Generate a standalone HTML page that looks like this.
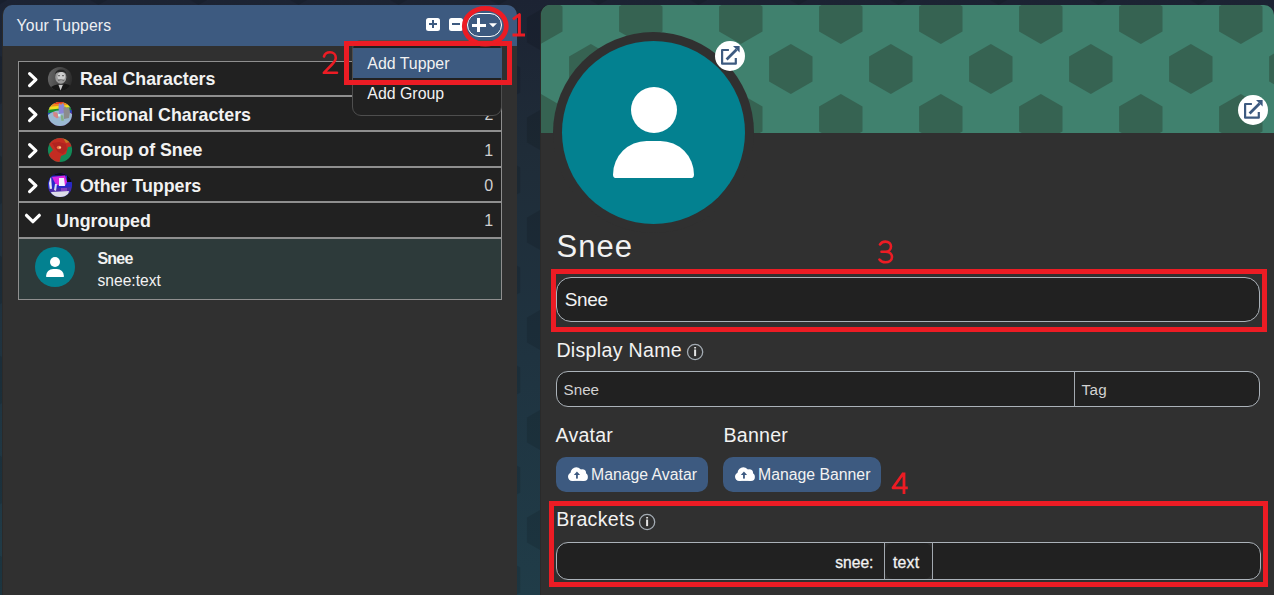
<!DOCTYPE html>
<html><head><meta charset="utf-8">
<style>
*{box-sizing:border-box;margin:0;padding:0}
html,body{width:1274px;height:595px;overflow:hidden;background:linear-gradient(180deg,#1c2333 0,#1f2c38 25%,#1f3340 60%,#203c48 100%);font-family:"Liberation Sans",sans-serif;color:#f2f2f2}
.a{position:absolute}
.t{position:absolute;white-space:nowrap;line-height:1}
#lp{left:2px;top:5px;width:515px;height:600px;background:#303030;border-left:1px solid #2a2a2a;border-radius:10px 10px 0 0;overflow:hidden}
#lh{left:0;top:0;width:514px;height:41px;background:#3d5a80}
.ln{background:#8f8f8f}
.cnt{position:absolute;color:#d0d0d0;font-size:16px;line-height:1}
#rp{left:540px;top:5px;width:734px;height:600px;background:#303030;border-left:1px solid #2a2a2a;border-radius:10px 10px 0 0;overflow:hidden}
.red{position:absolute;border:5px solid #ec1c24}
.rn{position:absolute;color:#ec1c24;line-height:1;white-space:nowrap}
.inp{position:absolute;background:#212121;border:1px solid #abb2b9}
.btn{position:absolute;background:#3d5a80;border-radius:10px}
</style></head><body>
<svg class="a" style="left:0;top:0" width="1274" height="595"><g fill="#000" fill-opacity="0.11"><polygon points="-1.4,-45.0 20.3,-32.5 20.3,-7.5 -1.4,5.0 -23.1,-7.5 -23.1,-32.5"/><polygon points="98.6,-45.0 120.3,-32.5 120.3,-7.5 98.6,5.0 76.9,-7.5 76.9,-32.5"/><polygon points="198.6,-45.0 220.3,-32.5 220.3,-7.5 198.6,5.0 176.9,-7.5 176.9,-32.5"/><polygon points="298.6,-45.0 320.3,-32.5 320.3,-7.5 298.6,5.0 276.9,-7.5 276.9,-32.5"/><polygon points="398.6,-45.0 420.3,-32.5 420.3,-7.5 398.6,5.0 376.9,-7.5 376.9,-32.5"/><polygon points="498.6,-45.0 520.3,-32.5 520.3,-7.5 498.6,5.0 476.9,-7.5 476.9,-32.5"/><polygon points="598.6,-45.0 620.3,-32.5 620.3,-7.5 598.6,5.0 576.9,-7.5 576.9,-32.5"/><polygon points="698.6,-45.0 720.3,-32.5 720.3,-7.5 698.6,5.0 676.9,-7.5 676.9,-32.5"/><polygon points="798.6,-45.0 820.3,-32.5 820.3,-7.5 798.6,5.0 776.9,-7.5 776.9,-32.5"/><polygon points="898.6,-45.0 920.3,-32.5 920.3,-7.5 898.6,5.0 876.9,-7.5 876.9,-32.5"/><polygon points="998.6,-45.0 1020.3,-32.5 1020.3,-7.5 998.6,5.0 976.9,-7.5 976.9,-32.5"/><polygon points="1098.6,-45.0 1120.3,-32.5 1120.3,-7.5 1098.6,5.0 1076.9,-7.5 1076.9,-32.5"/><polygon points="1198.6,-45.0 1220.3,-32.5 1220.3,-7.5 1198.6,5.0 1176.9,-7.5 1176.9,-32.5"/><polygon points="48.6,5.0 70.3,17.5 70.3,42.5 48.6,55.0 26.9,42.5 26.9,17.5"/><polygon points="148.6,5.0 170.3,17.5 170.3,42.5 148.6,55.0 126.9,42.5 126.9,17.5"/><polygon points="248.6,5.0 270.3,17.5 270.3,42.5 248.6,55.0 226.9,42.5 226.9,17.5"/><polygon points="348.6,5.0 370.3,17.5 370.3,42.5 348.6,55.0 326.9,42.5 326.9,17.5"/><polygon points="448.6,5.0 470.3,17.5 470.3,42.5 448.6,55.0 426.9,42.5 426.9,17.5"/><polygon points="548.6,5.0 570.3,17.5 570.3,42.5 548.6,55.0 526.9,42.5 526.9,17.5"/><polygon points="648.6,5.0 670.3,17.5 670.3,42.5 648.6,55.0 626.9,42.5 626.9,17.5"/><polygon points="748.6,5.0 770.3,17.5 770.3,42.5 748.6,55.0 726.9,42.5 726.9,17.5"/><polygon points="848.6,5.0 870.3,17.5 870.3,42.5 848.6,55.0 826.9,42.5 826.9,17.5"/><polygon points="948.6,5.0 970.3,17.5 970.3,42.5 948.6,55.0 926.9,42.5 926.9,17.5"/><polygon points="1048.6,5.0 1070.3,17.5 1070.3,42.5 1048.6,55.0 1026.9,42.5 1026.9,17.5"/><polygon points="1148.6,5.0 1170.3,17.5 1170.3,42.5 1148.6,55.0 1126.9,42.5 1126.9,17.5"/><polygon points="1248.6,5.0 1270.3,17.5 1270.3,42.5 1248.6,55.0 1226.9,42.5 1226.9,17.5"/><polygon points="-1.4,55.0 20.3,67.5 20.3,92.5 -1.4,105.0 -23.1,92.5 -23.1,67.5"/><polygon points="98.6,55.0 120.3,67.5 120.3,92.5 98.6,105.0 76.9,92.5 76.9,67.5"/><polygon points="198.6,55.0 220.3,67.5 220.3,92.5 198.6,105.0 176.9,92.5 176.9,67.5"/><polygon points="298.6,55.0 320.3,67.5 320.3,92.5 298.6,105.0 276.9,92.5 276.9,67.5"/><polygon points="398.6,55.0 420.3,67.5 420.3,92.5 398.6,105.0 376.9,92.5 376.9,67.5"/><polygon points="498.6,55.0 520.3,67.5 520.3,92.5 498.6,105.0 476.9,92.5 476.9,67.5"/><polygon points="598.6,55.0 620.3,67.5 620.3,92.5 598.6,105.0 576.9,92.5 576.9,67.5"/><polygon points="698.6,55.0 720.3,67.5 720.3,92.5 698.6,105.0 676.9,92.5 676.9,67.5"/><polygon points="798.6,55.0 820.3,67.5 820.3,92.5 798.6,105.0 776.9,92.5 776.9,67.5"/><polygon points="898.6,55.0 920.3,67.5 920.3,92.5 898.6,105.0 876.9,92.5 876.9,67.5"/><polygon points="998.6,55.0 1020.3,67.5 1020.3,92.5 998.6,105.0 976.9,92.5 976.9,67.5"/><polygon points="1098.6,55.0 1120.3,67.5 1120.3,92.5 1098.6,105.0 1076.9,92.5 1076.9,67.5"/><polygon points="1198.6,55.0 1220.3,67.5 1220.3,92.5 1198.6,105.0 1176.9,92.5 1176.9,67.5"/><polygon points="48.6,105.0 70.3,117.5 70.3,142.5 48.6,155.0 26.9,142.5 26.9,117.5"/><polygon points="148.6,105.0 170.3,117.5 170.3,142.5 148.6,155.0 126.9,142.5 126.9,117.5"/><polygon points="248.6,105.0 270.3,117.5 270.3,142.5 248.6,155.0 226.9,142.5 226.9,117.5"/><polygon points="348.6,105.0 370.3,117.5 370.3,142.5 348.6,155.0 326.9,142.5 326.9,117.5"/><polygon points="448.6,105.0 470.3,117.5 470.3,142.5 448.6,155.0 426.9,142.5 426.9,117.5"/><polygon points="548.6,105.0 570.3,117.5 570.3,142.5 548.6,155.0 526.9,142.5 526.9,117.5"/><polygon points="648.6,105.0 670.3,117.5 670.3,142.5 648.6,155.0 626.9,142.5 626.9,117.5"/><polygon points="748.6,105.0 770.3,117.5 770.3,142.5 748.6,155.0 726.9,142.5 726.9,117.5"/><polygon points="848.6,105.0 870.3,117.5 870.3,142.5 848.6,155.0 826.9,142.5 826.9,117.5"/><polygon points="948.6,105.0 970.3,117.5 970.3,142.5 948.6,155.0 926.9,142.5 926.9,117.5"/><polygon points="1048.6,105.0 1070.3,117.5 1070.3,142.5 1048.6,155.0 1026.9,142.5 1026.9,117.5"/><polygon points="1148.6,105.0 1170.3,117.5 1170.3,142.5 1148.6,155.0 1126.9,142.5 1126.9,117.5"/><polygon points="1248.6,105.0 1270.3,117.5 1270.3,142.5 1248.6,155.0 1226.9,142.5 1226.9,117.5"/><polygon points="-1.4,155.0 20.3,167.5 20.3,192.5 -1.4,205.0 -23.1,192.5 -23.1,167.5"/><polygon points="98.6,155.0 120.3,167.5 120.3,192.5 98.6,205.0 76.9,192.5 76.9,167.5"/><polygon points="198.6,155.0 220.3,167.5 220.3,192.5 198.6,205.0 176.9,192.5 176.9,167.5"/><polygon points="298.6,155.0 320.3,167.5 320.3,192.5 298.6,205.0 276.9,192.5 276.9,167.5"/><polygon points="398.6,155.0 420.3,167.5 420.3,192.5 398.6,205.0 376.9,192.5 376.9,167.5"/><polygon points="498.6,155.0 520.3,167.5 520.3,192.5 498.6,205.0 476.9,192.5 476.9,167.5"/><polygon points="598.6,155.0 620.3,167.5 620.3,192.5 598.6,205.0 576.9,192.5 576.9,167.5"/><polygon points="698.6,155.0 720.3,167.5 720.3,192.5 698.6,205.0 676.9,192.5 676.9,167.5"/><polygon points="798.6,155.0 820.3,167.5 820.3,192.5 798.6,205.0 776.9,192.5 776.9,167.5"/><polygon points="898.6,155.0 920.3,167.5 920.3,192.5 898.6,205.0 876.9,192.5 876.9,167.5"/><polygon points="998.6,155.0 1020.3,167.5 1020.3,192.5 998.6,205.0 976.9,192.5 976.9,167.5"/><polygon points="1098.6,155.0 1120.3,167.5 1120.3,192.5 1098.6,205.0 1076.9,192.5 1076.9,167.5"/><polygon points="1198.6,155.0 1220.3,167.5 1220.3,192.5 1198.6,205.0 1176.9,192.5 1176.9,167.5"/><polygon points="48.6,205.0 70.3,217.5 70.3,242.5 48.6,255.0 26.9,242.5 26.9,217.5"/><polygon points="148.6,205.0 170.3,217.5 170.3,242.5 148.6,255.0 126.9,242.5 126.9,217.5"/><polygon points="248.6,205.0 270.3,217.5 270.3,242.5 248.6,255.0 226.9,242.5 226.9,217.5"/><polygon points="348.6,205.0 370.3,217.5 370.3,242.5 348.6,255.0 326.9,242.5 326.9,217.5"/><polygon points="448.6,205.0 470.3,217.5 470.3,242.5 448.6,255.0 426.9,242.5 426.9,217.5"/><polygon points="548.6,205.0 570.3,217.5 570.3,242.5 548.6,255.0 526.9,242.5 526.9,217.5"/><polygon points="648.6,205.0 670.3,217.5 670.3,242.5 648.6,255.0 626.9,242.5 626.9,217.5"/><polygon points="748.6,205.0 770.3,217.5 770.3,242.5 748.6,255.0 726.9,242.5 726.9,217.5"/><polygon points="848.6,205.0 870.3,217.5 870.3,242.5 848.6,255.0 826.9,242.5 826.9,217.5"/><polygon points="948.6,205.0 970.3,217.5 970.3,242.5 948.6,255.0 926.9,242.5 926.9,217.5"/><polygon points="1048.6,205.0 1070.3,217.5 1070.3,242.5 1048.6,255.0 1026.9,242.5 1026.9,217.5"/><polygon points="1148.6,205.0 1170.3,217.5 1170.3,242.5 1148.6,255.0 1126.9,242.5 1126.9,217.5"/><polygon points="1248.6,205.0 1270.3,217.5 1270.3,242.5 1248.6,255.0 1226.9,242.5 1226.9,217.5"/><polygon points="-1.4,255.0 20.3,267.5 20.3,292.5 -1.4,305.0 -23.1,292.5 -23.1,267.5"/><polygon points="98.6,255.0 120.3,267.5 120.3,292.5 98.6,305.0 76.9,292.5 76.9,267.5"/><polygon points="198.6,255.0 220.3,267.5 220.3,292.5 198.6,305.0 176.9,292.5 176.9,267.5"/><polygon points="298.6,255.0 320.3,267.5 320.3,292.5 298.6,305.0 276.9,292.5 276.9,267.5"/><polygon points="398.6,255.0 420.3,267.5 420.3,292.5 398.6,305.0 376.9,292.5 376.9,267.5"/><polygon points="498.6,255.0 520.3,267.5 520.3,292.5 498.6,305.0 476.9,292.5 476.9,267.5"/><polygon points="598.6,255.0 620.3,267.5 620.3,292.5 598.6,305.0 576.9,292.5 576.9,267.5"/><polygon points="698.6,255.0 720.3,267.5 720.3,292.5 698.6,305.0 676.9,292.5 676.9,267.5"/><polygon points="798.6,255.0 820.3,267.5 820.3,292.5 798.6,305.0 776.9,292.5 776.9,267.5"/><polygon points="898.6,255.0 920.3,267.5 920.3,292.5 898.6,305.0 876.9,292.5 876.9,267.5"/><polygon points="998.6,255.0 1020.3,267.5 1020.3,292.5 998.6,305.0 976.9,292.5 976.9,267.5"/><polygon points="1098.6,255.0 1120.3,267.5 1120.3,292.5 1098.6,305.0 1076.9,292.5 1076.9,267.5"/><polygon points="1198.6,255.0 1220.3,267.5 1220.3,292.5 1198.6,305.0 1176.9,292.5 1176.9,267.5"/><polygon points="48.6,305.0 70.3,317.5 70.3,342.5 48.6,355.0 26.9,342.5 26.9,317.5"/><polygon points="148.6,305.0 170.3,317.5 170.3,342.5 148.6,355.0 126.9,342.5 126.9,317.5"/><polygon points="248.6,305.0 270.3,317.5 270.3,342.5 248.6,355.0 226.9,342.5 226.9,317.5"/><polygon points="348.6,305.0 370.3,317.5 370.3,342.5 348.6,355.0 326.9,342.5 326.9,317.5"/><polygon points="448.6,305.0 470.3,317.5 470.3,342.5 448.6,355.0 426.9,342.5 426.9,317.5"/><polygon points="548.6,305.0 570.3,317.5 570.3,342.5 548.6,355.0 526.9,342.5 526.9,317.5"/><polygon points="648.6,305.0 670.3,317.5 670.3,342.5 648.6,355.0 626.9,342.5 626.9,317.5"/><polygon points="748.6,305.0 770.3,317.5 770.3,342.5 748.6,355.0 726.9,342.5 726.9,317.5"/><polygon points="848.6,305.0 870.3,317.5 870.3,342.5 848.6,355.0 826.9,342.5 826.9,317.5"/><polygon points="948.6,305.0 970.3,317.5 970.3,342.5 948.6,355.0 926.9,342.5 926.9,317.5"/><polygon points="1048.6,305.0 1070.3,317.5 1070.3,342.5 1048.6,355.0 1026.9,342.5 1026.9,317.5"/><polygon points="1148.6,305.0 1170.3,317.5 1170.3,342.5 1148.6,355.0 1126.9,342.5 1126.9,317.5"/><polygon points="1248.6,305.0 1270.3,317.5 1270.3,342.5 1248.6,355.0 1226.9,342.5 1226.9,317.5"/><polygon points="-1.4,355.0 20.3,367.5 20.3,392.5 -1.4,405.0 -23.1,392.5 -23.1,367.5"/><polygon points="98.6,355.0 120.3,367.5 120.3,392.5 98.6,405.0 76.9,392.5 76.9,367.5"/><polygon points="198.6,355.0 220.3,367.5 220.3,392.5 198.6,405.0 176.9,392.5 176.9,367.5"/><polygon points="298.6,355.0 320.3,367.5 320.3,392.5 298.6,405.0 276.9,392.5 276.9,367.5"/><polygon points="398.6,355.0 420.3,367.5 420.3,392.5 398.6,405.0 376.9,392.5 376.9,367.5"/><polygon points="498.6,355.0 520.3,367.5 520.3,392.5 498.6,405.0 476.9,392.5 476.9,367.5"/><polygon points="598.6,355.0 620.3,367.5 620.3,392.5 598.6,405.0 576.9,392.5 576.9,367.5"/><polygon points="698.6,355.0 720.3,367.5 720.3,392.5 698.6,405.0 676.9,392.5 676.9,367.5"/><polygon points="798.6,355.0 820.3,367.5 820.3,392.5 798.6,405.0 776.9,392.5 776.9,367.5"/><polygon points="898.6,355.0 920.3,367.5 920.3,392.5 898.6,405.0 876.9,392.5 876.9,367.5"/><polygon points="998.6,355.0 1020.3,367.5 1020.3,392.5 998.6,405.0 976.9,392.5 976.9,367.5"/><polygon points="1098.6,355.0 1120.3,367.5 1120.3,392.5 1098.6,405.0 1076.9,392.5 1076.9,367.5"/><polygon points="1198.6,355.0 1220.3,367.5 1220.3,392.5 1198.6,405.0 1176.9,392.5 1176.9,367.5"/><polygon points="48.6,405.0 70.3,417.5 70.3,442.5 48.6,455.0 26.9,442.5 26.9,417.5"/><polygon points="148.6,405.0 170.3,417.5 170.3,442.5 148.6,455.0 126.9,442.5 126.9,417.5"/><polygon points="248.6,405.0 270.3,417.5 270.3,442.5 248.6,455.0 226.9,442.5 226.9,417.5"/><polygon points="348.6,405.0 370.3,417.5 370.3,442.5 348.6,455.0 326.9,442.5 326.9,417.5"/><polygon points="448.6,405.0 470.3,417.5 470.3,442.5 448.6,455.0 426.9,442.5 426.9,417.5"/><polygon points="548.6,405.0 570.3,417.5 570.3,442.5 548.6,455.0 526.9,442.5 526.9,417.5"/><polygon points="648.6,405.0 670.3,417.5 670.3,442.5 648.6,455.0 626.9,442.5 626.9,417.5"/><polygon points="748.6,405.0 770.3,417.5 770.3,442.5 748.6,455.0 726.9,442.5 726.9,417.5"/><polygon points="848.6,405.0 870.3,417.5 870.3,442.5 848.6,455.0 826.9,442.5 826.9,417.5"/><polygon points="948.6,405.0 970.3,417.5 970.3,442.5 948.6,455.0 926.9,442.5 926.9,417.5"/><polygon points="1048.6,405.0 1070.3,417.5 1070.3,442.5 1048.6,455.0 1026.9,442.5 1026.9,417.5"/><polygon points="1148.6,405.0 1170.3,417.5 1170.3,442.5 1148.6,455.0 1126.9,442.5 1126.9,417.5"/><polygon points="1248.6,405.0 1270.3,417.5 1270.3,442.5 1248.6,455.0 1226.9,442.5 1226.9,417.5"/><polygon points="-1.4,455.0 20.3,467.5 20.3,492.5 -1.4,505.0 -23.1,492.5 -23.1,467.5"/><polygon points="98.6,455.0 120.3,467.5 120.3,492.5 98.6,505.0 76.9,492.5 76.9,467.5"/><polygon points="198.6,455.0 220.3,467.5 220.3,492.5 198.6,505.0 176.9,492.5 176.9,467.5"/><polygon points="298.6,455.0 320.3,467.5 320.3,492.5 298.6,505.0 276.9,492.5 276.9,467.5"/><polygon points="398.6,455.0 420.3,467.5 420.3,492.5 398.6,505.0 376.9,492.5 376.9,467.5"/><polygon points="498.6,455.0 520.3,467.5 520.3,492.5 498.6,505.0 476.9,492.5 476.9,467.5"/><polygon points="598.6,455.0 620.3,467.5 620.3,492.5 598.6,505.0 576.9,492.5 576.9,467.5"/><polygon points="698.6,455.0 720.3,467.5 720.3,492.5 698.6,505.0 676.9,492.5 676.9,467.5"/><polygon points="798.6,455.0 820.3,467.5 820.3,492.5 798.6,505.0 776.9,492.5 776.9,467.5"/><polygon points="898.6,455.0 920.3,467.5 920.3,492.5 898.6,505.0 876.9,492.5 876.9,467.5"/><polygon points="998.6,455.0 1020.3,467.5 1020.3,492.5 998.6,505.0 976.9,492.5 976.9,467.5"/><polygon points="1098.6,455.0 1120.3,467.5 1120.3,492.5 1098.6,505.0 1076.9,492.5 1076.9,467.5"/><polygon points="1198.6,455.0 1220.3,467.5 1220.3,492.5 1198.6,505.0 1176.9,492.5 1176.9,467.5"/><polygon points="48.6,505.0 70.3,517.5 70.3,542.5 48.6,555.0 26.9,542.5 26.9,517.5"/><polygon points="148.6,505.0 170.3,517.5 170.3,542.5 148.6,555.0 126.9,542.5 126.9,517.5"/><polygon points="248.6,505.0 270.3,517.5 270.3,542.5 248.6,555.0 226.9,542.5 226.9,517.5"/><polygon points="348.6,505.0 370.3,517.5 370.3,542.5 348.6,555.0 326.9,542.5 326.9,517.5"/><polygon points="448.6,505.0 470.3,517.5 470.3,542.5 448.6,555.0 426.9,542.5 426.9,517.5"/><polygon points="548.6,505.0 570.3,517.5 570.3,542.5 548.6,555.0 526.9,542.5 526.9,517.5"/><polygon points="648.6,505.0 670.3,517.5 670.3,542.5 648.6,555.0 626.9,542.5 626.9,517.5"/><polygon points="748.6,505.0 770.3,517.5 770.3,542.5 748.6,555.0 726.9,542.5 726.9,517.5"/><polygon points="848.6,505.0 870.3,517.5 870.3,542.5 848.6,555.0 826.9,542.5 826.9,517.5"/><polygon points="948.6,505.0 970.3,517.5 970.3,542.5 948.6,555.0 926.9,542.5 926.9,517.5"/><polygon points="1048.6,505.0 1070.3,517.5 1070.3,542.5 1048.6,555.0 1026.9,542.5 1026.9,517.5"/><polygon points="1148.6,505.0 1170.3,517.5 1170.3,542.5 1148.6,555.0 1126.9,542.5 1126.9,517.5"/><polygon points="1248.6,505.0 1270.3,517.5 1270.3,542.5 1248.6,555.0 1226.9,542.5 1226.9,517.5"/><polygon points="-1.4,555.0 20.3,567.5 20.3,592.5 -1.4,605.0 -23.1,592.5 -23.1,567.5"/><polygon points="98.6,555.0 120.3,567.5 120.3,592.5 98.6,605.0 76.9,592.5 76.9,567.5"/><polygon points="198.6,555.0 220.3,567.5 220.3,592.5 198.6,605.0 176.9,592.5 176.9,567.5"/><polygon points="298.6,555.0 320.3,567.5 320.3,592.5 298.6,605.0 276.9,592.5 276.9,567.5"/><polygon points="398.6,555.0 420.3,567.5 420.3,592.5 398.6,605.0 376.9,592.5 376.9,567.5"/><polygon points="498.6,555.0 520.3,567.5 520.3,592.5 498.6,605.0 476.9,592.5 476.9,567.5"/><polygon points="598.6,555.0 620.3,567.5 620.3,592.5 598.6,605.0 576.9,592.5 576.9,567.5"/><polygon points="698.6,555.0 720.3,567.5 720.3,592.5 698.6,605.0 676.9,592.5 676.9,567.5"/><polygon points="798.6,555.0 820.3,567.5 820.3,592.5 798.6,605.0 776.9,592.5 776.9,567.5"/><polygon points="898.6,555.0 920.3,567.5 920.3,592.5 898.6,605.0 876.9,592.5 876.9,567.5"/><polygon points="998.6,555.0 1020.3,567.5 1020.3,592.5 998.6,605.0 976.9,592.5 976.9,567.5"/><polygon points="1098.6,555.0 1120.3,567.5 1120.3,592.5 1098.6,605.0 1076.9,592.5 1076.9,567.5"/><polygon points="1198.6,555.0 1220.3,567.5 1220.3,592.5 1198.6,605.0 1176.9,592.5 1176.9,567.5"/></g></svg>
<!-- left panel -->
<div id="lp" class="a">
  <div id="lh" class="a"></div>
</div>
<div class="t" style="left:16.6px;top:18.2px;font-size:15.7px;letter-spacing:0.15px;color:#eef0f4">Your Tuppers</div>
<!-- header icons -->
<div class="a" style="left:426.3px;top:17.5px;width:14px;height:13.5px;background:#fff;border-radius:2.5px"></div>
<div class="a" style="left:429.3px;top:23.3px;width:8.1px;height:2px;background:#3d5a80"></div>
<div class="a" style="left:432.3px;top:20.2px;width:2px;height:8px;background:#3d5a80"></div>
<div class="a" style="left:449px;top:17.5px;width:13.5px;height:13.5px;background:#fff;border-radius:2.5px"></div>
<div class="a" style="left:452px;top:23.4px;width:7.9px;height:1.8px;background:#3d5a80"></div>
<div class="a" style="left:467px;top:12.5px;width:35px;height:24.5px;border:1.3px solid #fff;border-radius:13px"></div>
<div class="a" style="left:471.5px;top:23.5px;width:14px;height:3.4px;background:#fff"></div>
<div class="a" style="left:476.8px;top:18.3px;width:3.4px;height:14px;background:#fff"></div>
<svg class="a" style="left:488px;top:22px" width="10" height="6"><path d="M1 1.2 L9 1.2 L5 5.2 Z" fill="#fff"/></svg>

<!-- group rows -->
<div class="a" style="left:18px;top:61px;width:484px;height:177px;background:#212121"></div>
<div class="a" style="left:18px;top:238px;width:484px;height:61px;background:#2d3a3a"></div>
<div class="a ln" style="left:18px;top:61px;width:484px;height:1px"></div>
<div class="a ln" style="left:18px;top:95px;width:484px;height:2px"></div>
<div class="a ln" style="left:18px;top:130px;width:484px;height:2px"></div>
<div class="a ln" style="left:18px;top:166px;width:484px;height:2px"></div>
<div class="a ln" style="left:18px;top:201px;width:484px;height:2px"></div>
<div class="a ln" style="left:18px;top:237px;width:484px;height:2px"></div>
<div class="a ln" style="left:18px;top:299px;width:484px;height:1px"></div>
<div class="a ln" style="left:18px;top:61px;width:1px;height:239px"></div>
<div class="a ln" style="left:501px;top:61px;width:1px;height:239px"></div>
<!-- chevrons -->
<svg class="a" style="left:24px;top:68px" width="18" height="24"><path d="M5.6 5.6 L11.9 11.6 L5.6 17.6" fill="none" stroke="#fff" stroke-width="3.2" stroke-linecap="round" stroke-linejoin="round"/></svg>
<svg class="a" style="left:24px;top:103px" width="18" height="24"><path d="M5.6 5.6 L11.9 11.6 L5.6 17.6" fill="none" stroke="#fff" stroke-width="3.2" stroke-linecap="round" stroke-linejoin="round"/></svg>
<svg class="a" style="left:24px;top:138.5px" width="18" height="24"><path d="M5.6 5.6 L11.9 11.6 L5.6 17.6" fill="none" stroke="#fff" stroke-width="3.2" stroke-linecap="round" stroke-linejoin="round"/></svg>
<svg class="a" style="left:24px;top:174px" width="18" height="24"><path d="M5.6 5.6 L11.9 11.6 L5.6 17.6" fill="none" stroke="#fff" stroke-width="3.2" stroke-linecap="round" stroke-linejoin="round"/></svg>
<svg class="a" style="left:22px;top:206px" width="24" height="20"><path d="M4.5 9.3 L10.9 15.7 L17.3 9.3" fill="none" stroke="#fff" stroke-width="3.2" stroke-linecap="round" stroke-linejoin="round"/></svg>

<!-- group avatars -->
<svg class="a" style="left:46px;top:65px" width="28" height="28"><defs><clipPath id="c1"><circle cx="14" cy="14" r="12.1"/></clipPath><linearGradient id="b1" x1="0" y1="0" x2="1" y2="0.2"><stop offset="0" stop-color="#6e6e6e"/><stop offset="0.55" stop-color="#484848"/><stop offset="1" stop-color="#2c2c2c"/></linearGradient></defs><g clip-path="url(#c1)"><rect width="28" height="28" fill="url(#b1)"/><ellipse cx="14.8" cy="12" rx="5.6" ry="6.8" fill="#9a9a9a"/><path d="M9 9 Q10 4.5 15 4.5 Q20 4.5 20.5 9 Q18 6.5 15 7 Q11 6.8 9 9 Z" fill="#262626"/><ellipse cx="15.3" cy="11.5" rx="3.8" ry="4.6" fill="#cdcdcd"/><rect x="12" y="10.2" width="2" height="1" fill="#5a5a5a"/><rect x="16" y="10.2" width="2" height="1" fill="#5a5a5a"/><path d="M11.8 14.6 Q15 13.6 18.4 14.8 L18 16 Q15 15.2 12.2 16 Z" fill="#6a6a6a"/><path d="M2 28 L5 22 Q9 19 12.5 19.5 L15 22 L18.5 18.5 Q23 19 26 22 L28 28 Z" fill="#161616"/><path d="M12.5 20 L14.6 25.5 L16.8 20 Z" fill="#c8c8c8"/></g></svg>
<svg class="a" style="left:46px;top:100px" width="28" height="28"><defs><clipPath id="c2"><circle cx="14" cy="14" r="12.1"/></clipPath></defs><g clip-path="url(#c2)"><rect width="28" height="28" fill="#6a2a90"/><path d="M0 -2 L28 -2 L28 12 L0 16 Z" fill="#2048c0"/><path d="M0 -2 L28 -2 L28 9.5 L0 13 Z" fill="#189030"/><path d="M0 -2 L28 -2 L28 7 L0 10 Z" fill="#f0e020"/><path d="M0 -2 L28 -2 L28 4.5 L0 7 Z" fill="#f08a20"/><path d="M0 -2 L28 -2 L28 2.5 L0 4.5 Z" fill="#e02424"/><path d="M2 15 Q8 10 14 10.5 Q22 10 27 15 L26 28 L2 28 Z" fill="#9ab9d2"/><path d="M13 3 L15 5 L17 3 L18.5 6 L18 13 L13 14 L12.5 7 Z" fill="#8a86d8"/><path d="M17.5 8 L19 6.5 L21 8 L23 7 L24 12 L23 18 L18 19 Z" fill="#8c8c8c"/><path d="M7 12 L11 12.5 L13 17 L11 18.5 L7.5 16 Z" fill="#d48484"/><path d="M14.5 15 L17 15.5 L18 20.5 L15.5 21 Z" fill="#84b084"/><rect x="12" y="14" width="2.5" height="2.5" fill="#c8f0e8"/></g></svg>
<svg class="a" style="left:46px;top:136px" width="28" height="28"><defs><clipPath id="c3"><circle cx="14" cy="14" r="12.1"/></clipPath></defs><g clip-path="url(#c3)"><rect width="28" height="28" fill="#138a58"/><path d="M0 0 L28 0 L28 10 L22 11 L20 18 L15 20 L13 28 L0 28 L0 25 L4 17 L7 14 L3 8 Z" fill="#c42c22"/><path d="M6 7 L13 6 L20 8 L21 14 L17 18 L12 16 L9 12 Z" fill="#b02420"/><path d="M17 2 L23 3 L24 6 L20 7 Z" fill="#c27a24"/><ellipse cx="13" cy="11.5" rx="2.2" ry="1.8" fill="#f07848"/><ellipse cx="14" cy="11.5" rx="0.9" ry="1.1" fill="#f8d0a0"/></g></svg>
<svg class="a" style="left:46px;top:171px" width="28" height="28"><defs><clipPath id="c4"><circle cx="14" cy="14" r="12.1"/></clipPath></defs><g clip-path="url(#c4)"><rect width="28" height="28" fill="#2828c8"/><rect x="0" y="0" width="28" height="4.5" fill="#0c0c14"/><rect x="21" y="4" width="7" height="7" fill="#0c0c14"/><path d="M6 6 L19 4.5 L21 11 L19 15 L10 14 Z" fill="#d828e0"/><path d="M13 7 L18 7 L19 15 L13 15 Z" fill="#f4f0ff"/><path d="M3 12 L5 5 L6 18 L4 20 Z" fill="#e8e8f0"/><path d="M3 18 L25 16 L25 22 L3 22 Z" fill="#4a2aa8"/><path d="M5 21 L23 20 L21 28 L7 28 Z" fill="#dcdce8"/><path d="M9 13 L11 13 L10 20 L8 19 Z" fill="#d8d8f0"/><rect x="15" y="17" width="6" height="3" fill="#8040c0"/></g></svg>

<!-- group names -->
<div class="t" style="left:80px;top:70.5px;font-size:17.8px;font-weight:700">Real Characters</div>
<div class="t" style="left:80px;top:107.2px;font-size:17.8px;font-weight:700">Fictional Characters</div>
<div class="t" style="left:80px;top:142.2px;font-size:17.8px;font-weight:700">Group of Snee</div>
<div class="t" style="left:80px;top:177.8px;font-size:17.8px;font-weight:700">Other Tuppers</div>
<div class="t" style="left:56px;top:213px;font-size:17.8px;font-weight:700">Ungrouped</div>
<div class="cnt" style="left:484.5px;top:106.5px">2</div>
<div class="cnt" style="left:484.2px;top:143.1px">1</div>
<div class="cnt" style="left:484.2px;top:178.4px">0</div>
<div class="cnt" style="left:484.2px;top:213.1px">1</div>

<!-- snee item -->
<div class="a" style="left:35px;top:247px;width:40px;height:40px;border-radius:50%;background:#038190"></div>
<div class="a" style="left:50px;top:257px;width:10px;height:10px;border-radius:50%;background:#fff"></div>
<div class="a" style="left:46px;top:268.5px;width:18px;height:8.5px;border-radius:9px 9px 1px 1px;background:#fff"></div>
<div class="t" style="left:97.5px;top:250.5px;font-size:16px;font-weight:700;letter-spacing:-0.8px">Snee</div>
<div class="t" style="left:97.5px;top:272.5px;font-size:15.6px">snee:text</div>

<!-- dropdown -->
<div class="a" style="left:352px;top:40px;width:150px;height:76px;background:#212121;border:1px solid #4e4e4e;border-radius:9px"></div>
<div class="a" style="left:352.5px;top:48px;width:149px;height:30px;background:#3d5a80"></div>
<div class="t" style="left:367.3px;top:56px;font-size:15.9px">Add Tupper</div>
<div class="t" style="left:367.3px;top:86px;font-size:15.9px">Add Group</div>

<!-- annotations -->
<div class="red" style="left:344px;top:41px;width:168px;height:44px"></div>


<!-- right panel -->
<div id="rp" class="a">
<div class="a" style="left:0;top:0;width:733px;height:128px;background:#40816e"><svg class="a" style="left:0;top:0" width="733" height="128"><g fill="#366352"><polygon points="-0.2,-11.1 21.5,1.4 21.5,26.4 -0.2,38.9 -21.9,26.4 -21.9,1.4"/><polygon points="99.8,-11.1 121.5,1.4 121.5,26.4 99.8,38.9 78.1,26.4 78.1,1.4"/><polygon points="199.8,-11.1 221.5,1.4 221.5,26.4 199.8,38.9 178.1,26.4 178.1,1.4"/><polygon points="299.8,-11.1 321.5,1.4 321.5,26.4 299.8,38.9 278.1,26.4 278.1,1.4"/><polygon points="399.8,-11.1 421.5,1.4 421.5,26.4 399.8,38.9 378.1,26.4 378.1,1.4"/><polygon points="499.8,-11.1 521.5,1.4 521.5,26.4 499.8,38.9 478.1,26.4 478.1,1.4"/><polygon points="599.8,-11.1 621.5,1.4 621.5,26.4 599.8,38.9 578.1,26.4 578.1,1.4"/><polygon points="699.8,-11.1 721.5,1.4 721.5,26.4 699.8,38.9 678.1,26.4 678.1,1.4"/><polygon points="49.8,38.9 71.5,51.4 71.5,76.4 49.8,88.9 28.1,76.4 28.1,51.4"/><polygon points="149.8,38.9 171.5,51.4 171.5,76.4 149.8,88.9 128.1,76.4 128.1,51.4"/><polygon points="249.8,38.9 271.5,51.4 271.5,76.4 249.8,88.9 228.1,76.4 228.1,51.4"/><polygon points="349.8,38.9 371.5,51.4 371.5,76.4 349.8,88.9 328.1,76.4 328.1,51.4"/><polygon points="449.8,38.9 471.5,51.4 471.5,76.4 449.8,88.9 428.1,76.4 428.1,51.4"/><polygon points="549.8,38.9 571.5,51.4 571.5,76.4 549.8,88.9 528.1,76.4 528.1,51.4"/><polygon points="649.8,38.9 671.5,51.4 671.5,76.4 649.8,88.9 628.1,76.4 628.1,51.4"/><polygon points="749.8,38.9 771.5,51.4 771.5,76.4 749.8,88.9 728.1,76.4 728.1,51.4"/><polygon points="-0.2,88.9 21.5,101.4 21.5,126.4 -0.2,138.9 -21.9,126.4 -21.9,101.4"/><polygon points="99.8,88.9 121.5,101.4 121.5,126.4 99.8,138.9 78.1,126.4 78.1,101.4"/><polygon points="199.8,88.9 221.5,101.4 221.5,126.4 199.8,138.9 178.1,126.4 178.1,101.4"/><polygon points="299.8,88.9 321.5,101.4 321.5,126.4 299.8,138.9 278.1,126.4 278.1,101.4"/><polygon points="399.8,88.9 421.5,101.4 421.5,126.4 399.8,138.9 378.1,126.4 378.1,101.4"/><polygon points="499.8,88.9 521.5,101.4 521.5,126.4 499.8,138.9 478.1,126.4 478.1,101.4"/><polygon points="599.8,88.9 621.5,101.4 621.5,126.4 599.8,138.9 578.1,126.4 578.1,101.4"/><polygon points="699.8,88.9 721.5,101.4 721.5,126.4 699.8,138.9 678.1,126.4 678.1,101.4"/></g></svg></div>
</div>
<!-- right panel content (page coords) -->
<svg class="a" style="left:541px;top:133px" width="733" height="1"></svg>
<div class="a" style="left:553px;top:31.8px;width:201px;height:201px;border-radius:50%;background:#303030"></div>
<div class="a" style="left:562px;top:40.8px;width:183px;height:183px;border-radius:50%;background:#038190"></div>
<div class="a" style="left:630.5px;top:86.5px;width:46px;height:46px;border-radius:50%;background:#fff"></div>
<div class="a" style="left:613px;top:141px;width:80.5px;height:37px;border-radius:40px 40px 4px 4px;background:#fff"></div>

<!-- edit icons -->
<svg class="a" style="left:715px;top:41px" width="30" height="30"><circle cx="15" cy="15" r="15" fill="#fff"/><path d="M13.9 9 H7.1 V22.7 H20.8 V16.9" fill="none" stroke="#3d5a80" stroke-width="2.2" stroke-linejoin="round"/><path d="M11.6 18.4 L21.6 8.4" stroke="#3d5a80" stroke-width="2.8"/><path d="M18 4.9 H24.6 V11.5 Z" fill="#3d5a80"/></svg>
<svg class="a" style="left:1238px;top:95px" width="30" height="30"><circle cx="15" cy="15" r="15" fill="#fff"/><path d="M13.9 9 H7.1 V22.7 H20.8 V16.9" fill="none" stroke="#3d5a80" stroke-width="2.2" stroke-linejoin="round"/><path d="M11.6 18.4 L21.6 8.4" stroke="#3d5a80" stroke-width="2.8"/><path d="M18 4.9 H24.6 V11.5 Z" fill="#3d5a80"/></svg>

<div class="t" style="left:556.5px;top:231.4px;font-size:31px;letter-spacing:1px">Snee</div>

<div class="inp" style="left:556px;top:277px;width:703.8px;height:45px;border-radius:15px"></div>
<div class="t" style="left:564.8px;top:289.6px;font-size:19px;letter-spacing:-0.4px">Snee</div>

<div class="t" style="left:556.4px;top:341.4px;font-size:19.6px;letter-spacing:0.3px">Display Name</div>
<svg class="a" style="left:686px;top:343px" width="18" height="18"><circle cx="9.1" cy="9" r="7.6" fill="none" stroke="#a3abb3" stroke-width="1.3"/><rect x="8.1" y="3.9" width="2" height="1.6" rx="0.5" fill="#e4e4e4"/><rect x="8.1" y="6.5" width="2" height="6.6" fill="#e4e4e4"/></svg>

<div class="inp" style="left:556px;top:371px;width:703.8px;height:36px;border-radius:12px"></div>
<div class="a" style="left:1073.5px;top:371px;width:1px;height:36px;background:#a3a9b0"></div>
<div class="t" style="left:563.6px;top:382.1px;font-size:15.2px;color:#d2d2d2">Snee</div>
<div class="t" style="left:1081.6px;top:382.1px;font-size:15.2px;letter-spacing:0.3px;color:#d2d2d2">Tag</div>

<div class="t" style="left:555.6px;top:425.6px;font-size:19.6px;letter-spacing:0.2px">Avatar</div>
<div class="t" style="left:723.6px;top:425.6px;font-size:19.6px;letter-spacing:0.2px">Banner</div>

<div class="btn" style="left:556px;top:457px;width:152px;height:35px"></div>
<div class="btn" style="left:723px;top:457px;width:158px;height:35px"></div>
<div class="t" style="left:591px;top:466.9px;font-size:15.8px">Manage Avatar</div>
<div class="t" style="left:758px;top:466.9px;font-size:15.8px">Manage Banner</div>
<svg class="a" style="left:567px;top:466px" width="22" height="16"><g fill="#fff"><circle cx="9.3" cy="7" r="5.7"/><circle cx="5.2" cy="10.7" r="4.2"/><circle cx="16.9" cy="10.9" r="4"/><circle cx="15.2" cy="7.2" r="3.9"/><rect x="5.2" y="9" width="11.7" height="5.9"/></g><path d="M6.8 9 L9.95 5.6 L13.1 9 Z" fill="#3d5a80"/><rect x="9.05" y="8.5" width="1.8" height="4.1" fill="#3d5a80"/></svg>
<svg class="a" style="left:734px;top:466px" width="22" height="16"><g fill="#fff"><circle cx="9.3" cy="7" r="5.7"/><circle cx="5.2" cy="10.7" r="4.2"/><circle cx="16.9" cy="10.9" r="4"/><circle cx="15.2" cy="7.2" r="3.9"/><rect x="5.2" y="9" width="11.7" height="5.9"/></g><path d="M6.8 9 L9.95 5.6 L13.1 9 Z" fill="#3d5a80"/><rect x="9.05" y="8.5" width="1.8" height="4.1" fill="#3d5a80"/></svg>

<div class="t" style="left:556.2px;top:510.3px;font-size:19.6px;letter-spacing:0.3px">Brackets</div>
<svg class="a" style="left:638px;top:513px" width="18" height="18"><circle cx="9.1" cy="9" r="7.6" fill="none" stroke="#a3abb3" stroke-width="1.3"/><rect x="8.1" y="3.9" width="2" height="1.6" rx="0.5" fill="#e4e4e4"/><rect x="8.1" y="6.5" width="2" height="6.6" fill="#e4e4e4"/></svg>

<div class="inp" style="left:556px;top:542px;width:704.8px;height:37.6px;border-radius:12px"></div>
<div class="a" style="left:885px;top:543px;width:47px;height:36px;background:#2b2b2b"></div><div class="a" style="left:885px;top:543px;width:47px;height:36px;background:#212121;border-radius:8px"></div>
<div class="a" style="left:884px;top:542px;width:1px;height:37.6px;background:#a3a9b0"></div>
<div class="a" style="left:932px;top:542px;width:1px;height:37.6px;background:#a3a9b0"></div>
<div class="t" style="left:835.3px;top:554.7px;font-size:15.6px;-webkit-text-stroke:0.3px #f2f2f2">snee:</div>
<div class="t" style="left:893px;top:554.7px;font-size:15.8px;letter-spacing:0.2px;-webkit-text-stroke:0.3px #f2f2f2">text</div>

<!-- annotations -->
<div class="red" style="left:551px;top:269px;width:716px;height:63px"></div>
<div class="red" style="left:548.5px;top:501px;width:719.5px;height:86px"></div>

<svg class="a" style="left:0;top:0" width="1274" height="595"><g fill="none" stroke="#ec1c24" stroke-linecap="round" stroke-linejoin="round">
<ellipse cx="485.3" cy="26.3" rx="21" ry="17.9" stroke-width="4.8"/>
<path d="M513 19.4 L519.4 14.6 V35 M512.5 35 H525" stroke-width="3" stroke-linecap="butt"/>
<path d="M324 56.5 C325 53.5 327.5 52.3 330 52.3 C333.5 52.3 335.8 54.8 335.8 57.8 C335.8 60.5 334 62.5 331.5 65 L323.8 72.8 H337" stroke-width="2.6"/>
<path d="M880 244.5 C881.5 242.3 883.3 241.6 885.3 241.6 C888.8 241.6 891 243.8 891 246.6 C891 249.7 888.5 251.8 885.5 251.8 H881.5 M885.5 251.8 C889.5 251.8 892 254 892 257 C892 260.3 889 262.3 885.5 262.3 C883 262.3 880.8 261.3 879.5 259.5" stroke-width="2.6"/>
<path d="M903.5 473 L893 487.8 H907.8 M904 472.5 V494" stroke-width="2.8" stroke-linecap="butt"/>
</g></svg>
</body></html>
